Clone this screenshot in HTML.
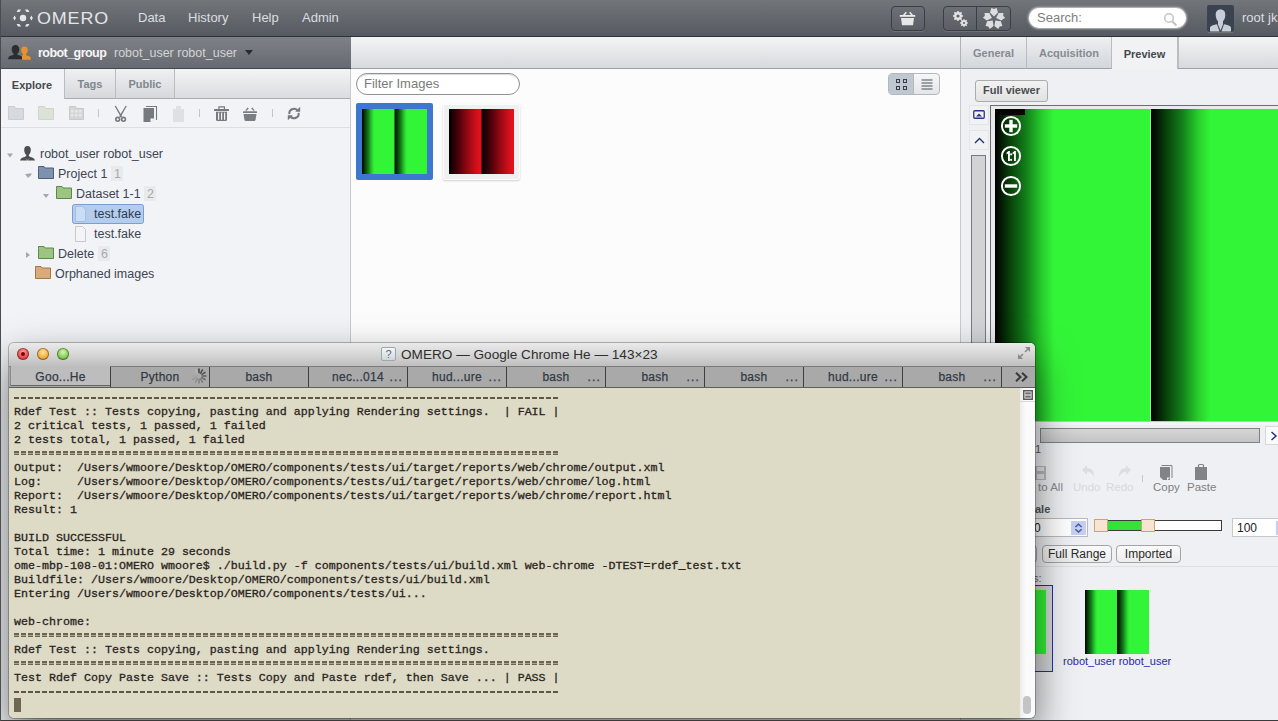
<!DOCTYPE html>
<html><head><meta charset="utf-8">
<style>
*{margin:0;padding:0;box-sizing:border-box}
html,body{width:1278px;height:721px;overflow:hidden;background:#f3f4f6;font-family:"Liberation Sans",sans-serif;position:relative}
.a{position:absolute}
#top{left:0;top:0;width:1278px;height:37px;background:linear-gradient(#72767b,#555a60);border-bottom:1px solid #2f3236}
#logo{left:37px;top:9px;color:#e4e5e7;font-size:16.6px;letter-spacing:0.8px;transform:scaleX(1.08);transform-origin:0 0}
.tbtn{top:6px;height:25px;border:1px solid #3b3e43;border-radius:4px;background:linear-gradient(#6c7076,#5a5f65);box-shadow:0 1px 0 rgba(255,255,255,.12)}
.rt{top:0;height:32px;border-right:1px solid #b9bdc2;border-bottom:1px solid #9ea2a7;font-size:11px;font-weight:bold;color:#858b93;text-align:center;line-height:33px;background:linear-gradient(#eef0f2,#d3d6da)}
.rt.act{background:#f1f2f4;border-bottom:none;color:#45484c;line-height:35px}
.ltab{top:0;height:30px;border-right:1px solid #b9bdc2;border-bottom:1px solid #a9adb2;font-size:11px;font-weight:bold;color:#7f868e;text-align:center;line-height:30px;background:linear-gradient(#eef0f2,#d6d8dc)}
.ltab.act{background:#f1f3f6;border-bottom:none;color:#46494d;line-height:32px}
.g{background:linear-gradient(90deg,#000 0%,#073d09 9%,#13801a 20%,#27cc2c 30%,#33f538 38%,#33f538 100%) 0 0/50% 100% repeat-x}
.r{background:linear-gradient(90deg,#000 0%,#50000a 30%,#a00a14 62%,#d5101c 86%,#ea1020 100%) 0 0/50% 100% repeat-x}
.menu{top:10px;color:#dcdee0;font-size:13px}
#grp{left:0;top:37px;width:351px;height:32px;background:linear-gradient(#7e8288,#676b71);border-bottom:1px solid #44474c}
#rhdr{left:351px;top:37px;width:927px;height:32px;background:linear-gradient(#f3f4f6,#d7d9dc);border-bottom:1px solid #9ea2a7}
#left{left:0;top:69px;width:351px;height:652px;background:#f1f3f6;border-right:1px solid #c8cbce}
#mid{left:351px;top:69px;width:609px;height:652px;background:#fcfcfc}
#right{left:960px;top:69px;width:318px;height:652px;background:#eff0f3;border-left:1px solid #c8cbce}
/* terminal */
#term{left:9px;top:343px;width:1026px;height:375px;border-radius:5px 5px 5px 5px;overflow:hidden;background:#dddac6;box-shadow:0 18px 40px rgba(0,0,0,.55),0 0 0 1px rgba(0,0,0,.25)}
#ttl{left:0;top:0;width:1026px;height:23px;background:linear-gradient(#eaeaea,#d6d6d6 50%,#bfbfbf);}
#tabs{left:0;top:23px;width:1026px;height:22px;background:#a9a9a9;border-top:1px solid #7b7b7b;border-bottom:1px solid #5d5d5d}
.tab{top:0;height:20px;border-left:1px solid #3e3e3e;font-size:12px;color:#333a46;text-align:center;line-height:21px;-webkit-text-stroke:0.25px #333a46;letter-spacing:0.3px}
#tbody{left:0;top:45px;width:1011px;height:330px;background:#dddac6}
#tscroll{left:1011px;top:45px;width:15px;height:330px;background:linear-gradient(90deg,#ececec,#fbfbfb 40%,#fafafa)}
pre{position:absolute;left:5px;top:3px;font-family:"Liberation Mono",monospace;font-size:11.67px;line-height:14px;color:#2a241d;-webkit-text-stroke:0.3px #2a241d}
.dm{color:#6e6453}
.tr{font-size:12.5px;color:#3d4452;white-space:nowrap;margin-top:1px}
.cnt{color:#a7a9ad}
.btn{border:1px solid #a9abae;border-radius:3px;background:linear-gradient(#f2f2f2,#e2e2e2);text-align:center;line-height:18px}
.btn2{top:545px;height:18px;border:1px solid #a2a4a7;border-radius:4px;background:linear-gradient(#fafafa,#ececec);font-size:12px;color:#2a2a2a;text-align:center;line-height:17px}
.rtx{font-size:11.5px}
.knob{top:519px;width:14px;height:13px;background:#f9e3d3;border:1px solid #c2ab68}
.el{position:absolute;right:4px;top:0;letter-spacing:1.2px}
.tl{top:5px;width:12px;height:12px;border-radius:6px;box-shadow:inset 0 0 0 1px rgba(60,30,10,.45)}
.dash{position:absolute;left:6px;width:546px;height:2px;background:repeating-linear-gradient(90deg,#5e5545 0 5px,transparent 5px 7px)}
.eq{position:absolute;left:6px;width:546px;height:4px;background:repeating-linear-gradient(90deg,#6c6454 0 5px,transparent 5px 7px)}
.eq i{position:absolute;left:0;top:2px;width:546px;height:1px;background:repeating-linear-gradient(90deg,#aaa390 0 5px,transparent 5px 7px)}
</style></head><body>
<div id="top" class="a">
  <svg class="a" style="left:11px;top:6px" width="24" height="24" viewBox="0 0 24 24"><circle cx="12" cy="12" r="3.2" fill="#e6e7e9"/><g fill="#e6e7e9"><path d="M20.40 14.60 L21.85 12.00 L20.40 9.40 L18.95 12.00 Z"/><path d="M18.45 6.03 L16.93 3.47 L13.95 3.43 L15.48 5.98 Z"/><path d="M10.05 3.43 L7.08 3.47 L5.55 6.03 L8.53 5.98 Z"/><path d="M3.60 9.40 L2.15 12.00 L3.60 14.60 L5.05 12.00 Z"/><path d="M5.55 17.97 L7.07 20.53 L10.05 20.57 L8.52 18.02 Z"/><path d="M13.95 20.57 L16.93 20.53 L18.45 17.97 L15.48 18.02 Z"/></g></svg>
  <div id="logo" class="a">OMERO</div>
  <div class="a menu" style="left:138px">Data</div>
  <div class="a menu" style="left:188px">History</div>
  <div class="a menu" style="left:252px">Help</div>
  <div class="a menu" style="left:302px">Admin</div>
  <div class="a tbtn" style="left:891px;width:34px"><svg class="a" style="left:0;top:0" width="32" height="23" viewBox="0 0 32 23"><g stroke="#ececec" stroke-width="1.5" fill="none"><path d="M11.5 8.5 L14.3 5.2"/><path d="M17.7 5.2 L20.5 8.5"/></g><path d="M7.8 8 L23.2 8 L23.2 9.8 L7.8 9.8 Z" fill="#ececec"/><path d="M9 11 L22 11 L21 18.2 L10 18.2 Z" fill="#e6e6e6"/></svg></div>
  <div class="a tbtn" style="left:943px;width:68px"><i class="a" style="left:32px;top:0;width:1px;height:24px;background:#3a3d42"></i>
    <svg class="a" style="left:7.5px;top:2.5px" width="18" height="18" viewBox="0 0 18 18"><g fill="#e4e4e4"><circle cx="6" cy="6" r="3.9"/><circle cx="12" cy="13" r="2.8"/></g><g stroke="#e4e4e4" stroke-width="1.5"><path d="M6 0.9V11.1M0.9 6H11.1M2.4 2.4L9.6 9.6M9.6 2.4L2.4 9.6"/><path d="M12 9.2V16.8M8.2 13H15.8M9.3 10.3L14.7 15.7M14.7 10.3L9.3 15.7"/></g><g fill="#5f6369"><circle cx="6" cy="6" r="1.6"/><circle cx="12" cy="13" r="1.1"/></g></svg>
    <svg class="a" style="left:37px;top:1px" width="28" height="24" viewBox="0 0 28 24"><path fill="#dcdddf" d="M13.00 8.50 L9.00 4.50 L10.40 -0.10 L13.00 1.10 L15.60 -0.10 L17.00 4.50 Z M15.09 10.02 L17.66 4.98 L22.47 4.89 L22.13 7.73 L24.07 9.84 L20.13 12.59 Z M14.29 12.48 L19.88 13.36 L21.45 17.91 L18.64 18.47 L17.24 20.97 L13.41 18.07 Z M11.71 12.48 L12.59 18.07 L8.76 20.97 L7.36 18.47 L4.55 17.91 L6.12 13.36 Z M10.91 10.02 L5.87 12.59 L1.93 9.84 L3.87 7.73 L3.53 4.89 L8.34 4.98 Z"/></svg>
  </div>
  <div class="a" style="left:1029px;top:8px;width:157px;height:20px;border-radius:10px;background:#fff;box-shadow:0 0 2px 1px rgba(255,255,255,.6)"><span class="a" style="left:8px;top:2px;font-size:13px;color:#7e7e7e">Search:</span>
    <svg class="a" style="left:134px;top:4px" width="15" height="15" viewBox="0 0 15 15"><circle cx="6" cy="6" r="4.3" stroke="#c4c4c4" stroke-width="1.5" fill="none"/><path d="M9.2 9.2 L13.5 13.5" stroke="#c4c4c4" stroke-width="2.2"/></svg></div>
  <div class="a" style="left:1207px;top:5px;width:27px;height:27px;background:#3b4351;border-radius:2px;box-shadow:0 1px 0 rgba(255,255,255,.15)">
    <svg class="a" style="left:0;top:0" width="27" height="27" viewBox="0 0 27 27"><g fill="#c9ced6"><path d="M13.5 4.6 C17 4.6 18.3 7 18.3 10 C18.3 13 17 15.3 16 16.3 L16 19.5 L13.5 25.5 L11 19.5 L11 16.3 C10 15.3 8.7 13 8.7 10 C8.7 7 10 4.6 13.5 4.6 Z"/><path d="M3 26.5 L3 23 C3 21 5.5 20 10 19.2 L12.6 26.5 Z"/><path d="M24 26.5 L24 23 C24 21 21.5 20 17 19.2 L14.4 26.5 Z"/></g></svg></div>
  <div class="a menu" style="left:1242px;top:10px;color:#dcdee0">root jk</div>
</div>
<div id="grp" class="a">
  <svg class="a" style="left:7px;top:6px" width="26" height="18" viewBox="0 0 26 18"><path d="M8.5 2 C11 2 12.3 3.8 12.3 6.2 C12.3 8.6 11.2 10.2 10.3 10.8 L10.3 11.8 C13 12.5 15.5 13.2 15.8 15 L15.8 16.3 L1.2 16.3 L1.2 15 C1.5 13.2 4 12.5 6.7 11.8 L6.7 10.8 C5.8 10.2 4.7 8.6 4.7 6.2 C4.7 3.8 6 2 8.5 2 Z" fill="#2c2d30"/><path d="M17.5 3.5 C19.7 3.5 20.8 5 20.8 7 C20.8 9.2 19.8 10.6 19 11.1 L19 12.3 C21.5 12.9 23.5 13.6 23.8 15.2 L23.8 16.8 L15 16.8 L15 12.3 L16 12.3 L16 11.1 C15.2 10.6 14.2 9.2 14.2 7 C14.2 5 15.3 3.5 17.5 3.5 Z" fill="#e8922e"/></svg>
  <div class="a" style="left:38px;top:9px;font-size:12.5px;font-weight:bold;color:#f6f6f6;letter-spacing:-0.55px">robot_group</div>
  <div class="a" style="left:114px;top:9px;font-size:12.5px;color:#d2d3d5">robot_user robot_user</div>
  <svg class="a" style="left:245px;top:13px" width="8" height="5"><path d="M0 0 H8 L4 5 Z" fill="#2a2b2d"/></svg>
</div>
<div id="rhdr" class="a">
  <div class="a" style="left:609px;top:0;width:1px;height:32px;background:#b0b4b9"></div>
  <div class="a rt" style="left:610px;width:66px">General</div>
  <div class="a rt" style="left:676px;width:85px">Acquisition</div>
  <div class="a rt act" style="left:761px;width:66px">Preview</div>
  <div class="a" style="left:827px;top:0;width:1px;height:31px;background:#b9bdc2"></div>
</div>
<div id="left" class="a">
  <div class="a ltab act" style="left:0;width:65px">Explore</div>
  <div class="a ltab" style="left:65px;width:51px">Tags</div>
  <div class="a ltab" style="left:116px;width:59px">Public</div>
  <div class="a" style="left:175px;top:0;width:175px;height:30px;border-bottom:1px solid #a9adb2;background:linear-gradient(#f3f4f6,#dadcdf)"></div>
  <div class="a" style="left:0;top:58px;width:350px;height:1px;background:#dfe1e4"></div>
</div>
<div id="mid" class="a">
  <div class="a" style="left:5px;top:4px;width:164px;height:22px;border:1px solid #8f9396;border-radius:11px;background:#fff;box-shadow:inset 0 1px 1px rgba(0,0,0,.15)"><span class="a" style="left:7px;top:2px;font-size:13px;color:#7a7a7a">Filter Images</span></div>
  <div class="a" style="left:537px;top:4px;width:52px;height:22px;border:1px solid #b4b8bd;border-radius:4px;background:linear-gradient(#f6f7f8,#e3e5e8);overflow:hidden">
    <div class="a" style="left:0;top:0;width:25px;height:20px;background:#bfc7d0;border-right:1px solid #b4b8bd"></div>
    <svg class="a" style="left:7px;top:5px" width="11" height="11"><g fill="#3a3e44"><rect x="0" y="0" width="4" height="4"/><rect x="7" y="0" width="4" height="4"/><rect x="0" y="7" width="4" height="4"/><rect x="7" y="7" width="4" height="4"/></g><g fill="#bfc7d0"><rect x="1" y="1" width="2" height="2"/><rect x="8" y="1" width="2" height="2"/><rect x="1" y="8" width="2" height="2"/><rect x="8" y="8" width="2" height="2"/></g></svg>
    <svg class="a" style="left:32px;top:5px" width="12" height="11"><g fill="#4a4e54"><rect x="0.5" y="0.5" width="11" height="1"/><rect x="0.5" y="3.5" width="11" height="1"/><rect x="0.5" y="6.5" width="11" height="1"/><rect x="0.5" y="9.5" width="11" height="1"/></g></svg>
  </div>
  <div class="a" style="left:5px;top:34px;width:77px;height:77px;background:#3d78cf;border-radius:2px"></div>
  <div class="a img g" style="left:11px;top:40px;width:65px;height:65px"></div>
  <div class="a" style="left:92px;top:35px;width:77px;height:76px;background:#f0f0f0;border:1px solid #fbfbfb;border-radius:2px;box-shadow:0 1px 2px rgba(0,0,0,.18)"></div>
  <div class="a img r" style="left:98px;top:40px;width:65px;height:65px"></div>
</div>
<div id="right" class="a"></div>
<div class="a btn" style="left:975px;top:80px;width:73px;height:22px;font-weight:bold;font-size:11px;color:#4a4d52">Full viewer</div>
<div class="a" style="left:969px;top:105px;width:20px;height:20px;background:#f1f2f4;border:1px solid #e3e4e6"><svg class="a" style="left:3px;top:4px" width="12" height="10"><rect x="0.75" y="0.75" width="10.5" height="7.5" rx="1" fill="none" stroke="#2a3585" stroke-width="1.3"/><path d="M3 6.5 L6 3.5 L9 6.5 Z" fill="#2a3585"/></svg></div>
<div class="a" style="left:969px;top:130px;width:20px;height:20px;background:#f1f2f4;border:1px solid #e3e4e6"><svg class="a" style="left:4px;top:6px" width="12" height="8"><path d="M1 6 L5.5 1.5 L10 6" fill="none" stroke="#23306e" stroke-width="1.4"/></svg></div>
<div class="a" style="left:971px;top:155px;width:15px;height:190px;background:#d2d3d5;border:1px solid #77797c"></div>
<div class="a" style="left:990px;top:105px;width:288px;height:320px;background:#e9eaec;border:1px solid #6b6d70;border-right:none"></div>
<div class="a img g" style="left:995px;top:109px;width:312px;height:312px;background-size:156px 100%"></div>
<div class="a" style="left:1150px;top:109px;width:1px;height:312px;background:rgba(200,230,200,.6)"></div>
<div class="a" style="left:995px;top:109px;width:30px;height:6px;background:#050505"></div>
<svg class="a" style="left:999px;top:114px" width="24" height="84" viewBox="0 0 24 84">
 <g fill="none" stroke="#fff" stroke-width="2"><circle cx="12" cy="12" r="9.1"/><circle cx="12" cy="42" r="9.1"/><circle cx="12" cy="72" r="9.1"/></g>
 <g fill="#fff"><rect x="10.3" y="5.8" width="3.4" height="12.4"/><rect x="5.8" y="10.3" width="12.4" height="3.4"/><rect x="5.8" y="70.3" width="12.4" height="3.4"/></g>
 <g fill="#fff"><path d="M7.6 38.6 L9.6 37 L10.9 37 L10.9 47 L9 47 L9 39.6 L7.6 40.6 Z"/><rect x="11.2" y="39.4" width="1.8" height="1.9"/><rect x="11.2" y="44.9" width="1.8" height="1.9"/><path d="M13.6 38.6 L15.6 37 L16.9 37 L16.9 47 L15 47 L15 39.6 L13.6 40.6 Z"/></g>
</svg>
<div class="a" style="left:990px;top:421px;width:288px;height:4px;background:#f4f5f7;border-top:1px solid #c0c2c5"></div>
<div class="a" style="left:1040px;top:428px;width:220px;height:15px;background:linear-gradient(#d6d6d6,#c4c4c4);border:1px solid #7f8184"></div>
<div class="a" style="left:1265px;top:426px;width:16px;height:19px;background:#fafafa;border:1px solid #d8d8d8"><svg class="a" style="left:4px;top:4px" width="8" height="10"><path d="M1.5 1 L6 5 L1.5 9" fill="none" stroke="#23306e" stroke-width="1.5"/></svg></div>
<div class="a" style="left:1035px;top:443px;font-size:11px;color:#555">1</div>
<svg class="a" style="left:1034px;top:462px" width="190" height="22" viewBox="1034 462 190 22">
 <path d="M1035 466 L1046 466 L1046 480 L1035 480 Z" fill="#b9bbbe"/><rect x="1037" y="474" width="7" height="5" fill="#e8e9eb"/><rect x="1037" y="467" width="7" height="4" fill="#e8e9eb"/>
 <path d="M1082 470 L1087 465 L1087 468 C1092 468 1094 471 1094 477 C1092 473 1090 472 1087 472 L1087 475 Z" fill="#dcdde0"/>
 <path d="M1131 470 L1126 465 L1126 468 C1121 468 1119 471 1119 477 C1121 473 1123 472 1126 472 L1126 475 Z" fill="#dcdde0"/>
 <rect x="1142" y="475" width="1" height="7" fill="#c8c9cb"/>
 <path d="M1160 467 L1170 467 L1170 480 L1163 480 L1160 477 Z" fill="#818387"/><path d="M1161.5 465.5 L1172 465.5 L1172 478" stroke="#818387" fill="none"/><path d="M1170 477.5 L1167 480.5 L1167 477.5 Z" fill="#eef0f2"/>
 <path d="M1195 467 L1207 467 L1207 480 L1195 480 Z" fill="#818387"/><rect x="1198.5" y="464.5" width="5" height="3.5" rx="1" fill="none" stroke="#818387" stroke-width="1.2"/>
</svg>
<div class="a rtx" style="left:1038px;top:481px;color:#8a8c90">to All</div>
<div class="a rtx" style="left:1073px;top:481px;color:#d7d8db">Undo</div>
<div class="a rtx" style="left:1106px;top:481px;color:#d7d8db">Redo</div>
<div class="a rtx" style="left:1153px;top:481px;color:#7d8084">Copy</div>
<div class="a rtx" style="left:1187px;top:481px;color:#7d8084">Paste</div>
<div class="a" style="left:1035px;top:503px;font-size:11px;font-weight:bold;color:#505357">ale</div>
<div class="a" style="left:1020px;top:518px;width:68px;height:19px;background:#fff;border:1px solid #b7b9bc"><span class="a" style="left:13px;top:2px;font-size:12px;color:#222">0</span><div class="a" style="left:50px;top:2px;width:15px;height:14px;background:#c8cef1"><svg class="a" style="left:3px;top:1px" width="9" height="12"><path d="M1 4.8 L4.5 1.5 L8 4.8 L6.6 4.8 L4.5 2.9 L2.4 4.8 Z M1 7.4 L4.5 10.7 L8 7.4 L6.6 7.4 L4.5 9.3 L2.4 7.4 Z" fill="#3a5a9a" stroke="#3a5a9a" stroke-width="0.6"/></svg></div></div>
<div class="a" style="left:1094px;top:520px;width:128px;height:11px;background:#fff;border:1px solid #3a3a3a"></div>
<div class="a" style="left:1108px;top:521px;width:33px;height:9px;background:#33e23a"></div>
<div class="a knob" style="left:1094px"></div><div class="a knob" style="left:1141px"></div>
<div class="a" style="left:1232px;top:518px;width:60px;height:19px;background:#fff;border:1px solid #c7c9cc"><span class="a" style="left:4px;top:2px;font-size:12px;color:#222">100</span><div class="a" style="left:43px;top:2px;width:15px;height:14px;background:#c8cef1"></div></div>
<div class="a btn2" style="left:1010px;width:27px"></div>
<div class="a btn2" style="left:1042px;width:70px">Full Range</div>
<div class="a btn2" style="left:1116px;width:65px">Imported</div>
<div class="a" style="left:1020px;top:566px;width:258px;height:1px;background:#dddfe2"></div>
<div class="a" style="left:1033px;top:572px;font-size:11px;color:#666">s:</div>
<div class="a" style="left:1010px;top:585px;width:43px;height:87px;border:1px solid #2432a6;background:#d7d8da"></div>
<div class="a img g" style="left:1014px;top:590px;width:32px;height:64px;background-size:64px 100%;background-position:-32px 0"></div>
<div class="a img g" style="left:1085px;top:590px;width:64px;height:64px;background-size:32px 100%"></div>
<div class="a" style="left:1063px;top:655px;font-size:11px;color:#2626b0">robot_user robot_user</div>
<!-- toolbar -->
<svg class="a" style="left:0;top:98px" width="350" height="30" viewBox="0 98 350 30">
 <g fill="#d6d9dd" stroke="#c9ccd1" stroke-width="1"><path d="M8.5 108.5 L8.5 106.5 L14.5 106.5 L15.5 108.5 L23.5 108.5 L23.5 119.5 L8.5 119.5 Z"/></g>
 <g fill="#dce3d6" stroke="#cfd6c8" stroke-width="1"><path d="M38.5 108.5 L38.5 106.5 L44.5 106.5 L45.5 108.5 L53.5 108.5 L53.5 119.5 L38.5 119.5 Z"/></g>
 <g fill="#d4d5d7" stroke="#c8c9cb"><path d="M69.5 108.5 L69.5 106.5 L75.5 106.5 L76.5 108.5 L83.5 108.5 L83.5 119.5 L69.5 119.5 Z"/></g>
 <g fill="#e6e7e9"><rect x="71" y="110" width="2.5" height="2.5"/><rect x="75" y="110" width="2.5" height="2.5"/><rect x="79" y="110" width="2.5" height="2.5"/><rect x="71" y="114" width="2.5" height="2.5"/><rect x="75" y="114" width="2.5" height="2.5"/><rect x="79" y="114" width="2.5" height="2.5"/></g>
 <rect x="98" y="109" width="1" height="8" fill="#c4c6c9"/>
 <rect x="199" y="109" width="1" height="8" fill="#c4c6c9"/>
 <rect x="272" y="109" width="1" height="8" fill="#c4c6c9"/>
 <g fill="#76797d"><path d="M114.6 106 L115.8 105.8 L122.2 116.5 L121 117.5 Z"/><path d="M126.8 106 L125.6 105.8 L119.2 116.5 L120.4 117.5 Z"/></g><g stroke="#76797d" stroke-width="1.6" fill="none"><circle cx="117.7" cy="119.3" r="1.9"/><circle cx="123.5" cy="119.3" r="1.9"/></g>
 <path d="M143.5 108 L154 108 L154 122 L143.5 122 Z" fill="#76797d"/><path d="M146 106.5 L156.5 106.5 L156.5 120" stroke="#76797d" stroke-width="1.1" fill="none"/><path d="M154 118.5 L150.5 122 L154 122 Z" fill="#f2f3f5"/><path d="M154 118.5 L150.5 118.5 L150.5 122 Z" fill="#fff"/>
 <path d="M173 109 L184 109 L184 122 L173 122 Z" fill="#dfe0e2"/><rect x="176" y="106" width="5" height="4" fill="#dfe0e2"/>
 <g fill="#76797d"><rect x="214" y="109" width="15" height="2" rx="0.5"/><path d="M218.3 109 L218.3 106.2 L225 106.2 L225 109 L223.8 109 L223.8 107.4 L219.5 107.4 L219.5 109 Z"/><path d="M216 111.8 L227 111.8 L227 119.5 Q227 121 225.5 121 L217.5 121 Q216 121 216 119.5 Z"/></g><g fill="#f2f3f5"><rect x="218" y="112.6" width="1.2" height="7.2"/><rect x="221" y="112.6" width="1.2" height="7.2"/><rect x="224" y="112.6" width="1.2" height="7.2"/></g>
 <g fill="#7a7d81"><path d="M245.2 110.4 L247.6 107.6 L248.8 108.4 L246.6 110.8 Z"/><path d="M254.8 110.4 L252.4 107.6 L251.2 108.4 L253.4 110.8 Z"/><rect x="243" y="111.2" width="14" height="1.8" rx="0.6"/><path d="M243.5 114 L256.5 114 L255.5 120 Q255.3 121 254.3 121 L245.7 121 Q244.7 121 244.5 120 Z"/></g>
 <g stroke="#76797d" stroke-width="2" fill="none"><path d="M289.4 114.2 A4.6 4.6 0 0 1 297.5 110.5"/><path d="M298.6 112.8 A4.6 4.6 0 0 1 290.5 116.5"/></g><path d="M300.2 106.8 L300.2 111.8 L295.2 111.8 Z" fill="#76797d"/><path d="M287.8 120.2 L287.8 115.2 L292.8 115.2 Z" fill="#76797d"/>
 <rect x="0" y="127" width="350" height="1" fill="#dcdee1"/>
</svg>
<!-- tree -->
<svg class="a" style="left:0;top:140px" width="160" height="145" viewBox="0 140 160 145">
 <path d="M7 153.5 L13 153.5 L10 157.5 Z" fill="#a3a8ae"/>
 <path d="M27.5 173.5 L32 173.5 L29.75 177 Z" fill="#a3a8ae"/><path d="M25 174 L31 174 L28 178 Z" fill="#a3a8ae"/>
 <path d="M43 194 L49 194 L46 198 Z" fill="#a3a8ae"/>
 <path d="M26 252 L30 255 L26 258 Z" fill="#a3a8ae"/>
 <g fill="#4c4d50"><path d="M27.5 146 C30 146 30.8 148 30.8 150 C30.8 152.5 29.5 154.5 28.8 155 L28.8 156 L31 157.3 L27.5 160 L24 157.3 L26.2 156 L26.2 155 C25.5 154.5 24.2 152.5 24.2 150 C24.2 148 25 146 27.5 146 Z"/><path d="M20 160.5 C20.5 158.5 22 157.5 24.5 157 L27.5 160.5 Z"/><path d="M35 160.5 C34.5 158.5 33 157.5 30.5 157 L27.5 160.5 Z"/></g>
 <path d="M38.5 168.5 L38.5 166.5 L44 166.5 L45 168 L53.5 168 L53.5 178.5 L38.5 178.5 Z" fill="#7d92ad" stroke="#4d5e75"/>
 <path d="M56.5 188.5 L56.5 186.5 L62 186.5 L63 188 L71.5 188 L71.5 198.5 L56.5 198.5 Z" fill="#9dc483" stroke="#5b8848"/>
 <path d="M38.5 248.5 L38.5 246.5 L44 246.5 L45 248 L53.5 248 L53.5 258.5 L38.5 258.5 Z" fill="#9dc483" stroke="#5b8848"/>
 <path d="M35.5 268.5 L35.5 266.5 L41 266.5 L42 268 L50.5 268 L50.5 278.5 L35.5 278.5 Z" fill="#d9aa7a" stroke="#a0774c"/>
 <rect x="72.5" y="204.5" width="71" height="19" rx="2" fill="#b4cdee" stroke="#7d9dcb"/>
 <path d="M75.5 206.5 L82.5 206.5 L85.5 209.5 L85.5 221.5 L75.5 221.5 Z" fill="#c9ddf5" stroke="#a6c0e4"/>
 <path d="M75.5 226.5 L82.5 226.5 L85.5 229.5 L85.5 241.5 L75.5 241.5 Z" fill="#f4f4f4" stroke="#c9c9c9"/>
 <rect x="111" y="166" width="12" height="15" fill="#e9eaec"/>
 <rect x="144" y="186" width="12" height="15" fill="#e9eaec"/>
 <rect x="98" y="246" width="12" height="15" fill="#e9eaec"/>
</svg>
<div class="a tr" style="left:40px;top:146px">robot_user robot_user</div>
<div class="a tr" style="left:58px;top:166px">Project 1</div><div class="a tr cnt" style="left:114px;top:166px">1</div>
<div class="a tr" style="left:76px;top:186px">Dataset 1-1</div><div class="a tr cnt" style="left:147px;top:186px">2</div>
<div class="a tr" style="left:94px;top:206px;color:#2d3a4f">test.fake</div>
<div class="a tr" style="left:94px;top:226px">test.fake</div>
<div class="a tr" style="left:58px;top:246px">Delete</div><div class="a tr cnt" style="left:101px;top:246px">6</div>
<div class="a tr" style="left:55px;top:266px">Orphaned images</div>
<div id="term" class="a">
  <div id="ttl" class="a">
    <div class="a tl" style="left:8px;background:radial-gradient(circle at 50% 35%,#f7a8a8 0,#e9494c 55%,#b3262a 100%)"><i class="a" style="left:4px;top:4px;width:4px;height:4px;border-radius:2px;background:#7a0008"></i></div>
    <div class="a tl" style="left:28px;background:radial-gradient(circle at 50% 35%,#ffe0a0 0,#f0b040 55%,#b07a18 100%)"></div>
    <div class="a tl" style="left:48px;background:radial-gradient(circle at 50% 35%,#d6f5b8 0,#7fd055 55%,#3f8a22 100%)"></div>
    <div class="a" style="left:372px;top:4px;width:15px;height:14px;border:1px solid #9aa;background:linear-gradient(#f4f6f8,#cfd6dc);border-radius:2px;font-size:11px;line-height:12px;text-align:center;color:#667">?</div>
    <div class="a" style="left:392px;top:4px;font-size:13.6px;color:#2e2e2e;white-space:nowrap">OMERO — Google Chrome He — 143×23</div>
    <svg class="a" style="left:1008px;top:3px" width="14" height="14" viewBox="0 0 14 14"><g stroke="#8a8a8a" stroke-width="1.6" fill="none"><path d="M2 12 L6 8"/><path d="M8 6 L12 2"/></g><g fill="#8a8a8a"><path d="M1 8 L1 13 L6 13 Z"/><path d="M8 1 L13 1 L13 6 Z"/></g></svg>
  </div>
  <div id="tabs" class="a">
    <div class="a tab" style="left:1px;top:-1px;width:100px;background:#bdbdbd;border-left:1px solid #8a8a8a;border-bottom:1px solid #666;height:20px;line-height:22px">Goo...He</div>
    <div class="a tab" style="left:101px;width:99px">Python<svg class="a" style="left:80px;top:0.5px" width="16" height="16" viewBox="0 0 16 16"><g stroke-width="1.5" stroke-linecap="round"><path d="M8.00 4.70L8.00 1.00" stroke="#404040"/><path d="M9.65 5.14L11.50 1.94" stroke="#4a4a4a"/><path d="M10.86 6.35L14.06 4.50" stroke="#555555"/><path d="M11.30 8.00L15.00 8.00" stroke="#606060"/><path d="M10.86 9.65L14.06 11.50" stroke="#6b6b6b"/><path d="M9.65 10.86L11.50 14.06" stroke="#767676"/><path d="M8.00 11.30L8.00 15.00" stroke="#818181"/><path d="M6.35 10.86L4.50 14.06" stroke="#8c8c8c"/><path d="M5.14 9.65L1.94 11.50" stroke="#979797"/><path d="M4.70 8.00L1.00 8.00" stroke="#a2a2a2"/><path d="M5.14 6.35L1.94 4.50" stroke="#adadad"/><path d="M6.35 5.14L4.50 1.94" stroke="#b8b8b8"/></g></svg></div>
    <div class="a tab" style="left:200px;width:99px">bash</div>
    <div class="a tab" style="left:299px;width:99px">nec...014<span class="el">...</span></div>
    <div class="a tab" style="left:398px;width:99px">hud...ure<span class="el">...</span></div>
    <div class="a tab" style="left:497px;width:99px">bash<span class="el">...</span></div>
    <div class="a tab" style="left:596px;width:99px">bash<span class="el">...</span></div>
    <div class="a tab" style="left:695px;width:99px">bash<span class="el">...</span></div>
    <div class="a tab" style="left:794px;width:99px">hud...ure<span class="el">...</span></div>
    <div class="a tab" style="left:893px;width:99px">bash<span class="el">...</span></div>
    <div class="a tab" style="left:992px;width:34px"><svg class="a" style="left:13px;top:5px" width="14" height="10" viewBox="0 0 14 10"><path d="M1 0.8 L5.5 5 L1 9.2 M7 0.8 L11.5 5 L7 9.2" fill="none" stroke="#3a3a3a" stroke-width="2"/></svg></div>
  </div>
  <div id="tbody" class="a">
<pre>

Rdef Test :: Tests copying, pasting and applying Rendering settings.  | FAIL |
2 critical tests, 1 passed, 1 failed
2 tests total, 1 passed, 1 failed

Output:  /Users/wmoore/Desktop/OMERO/components/tests/ui/target/reports/web/chrome/output.xml
Log:     /Users/wmoore/Desktop/OMERO/components/tests/ui/target/reports/web/chrome/log.html
Report:  /Users/wmoore/Desktop/OMERO/components/tests/ui/target/reports/web/chrome/report.html
Result: 1

BUILD SUCCESSFUL
Total time: 1 minute 29 seconds
ome-mbp-108-01:OMERO wmoore$ ./build.py -f components/tests/ui/build.xml web-chrome -DTEST=rdef_test.txt
Buildfile: /Users/wmoore/Desktop/OMERO/components/tests/ui/build.xml
Entering /Users/wmoore/Desktop/OMERO/components/tests/ui...

web-chrome:

Rdef Test :: Tests copying, pasting and applying Rendering settings.

Test Rdef Copy Paste Save :: Tests Copy and Paste rdef, then Save ... | PASS |

</pre>
<div class="dash" style="left:5px;top:9px"></div><div class="eq" style="left:5px;top:63px"><i></i></div><div class="eq" style="left:5px;top:245px"><i></i></div><div class="eq" style="left:5px;top:273px"><i></i></div><div class="dash" style="left:5px;top:303px"></div>
<div class="a" style="left:5px;top:310px;width:7px;height:14px;background:#6e6555"></div>
  </div>
  <div id="tscroll" class="a"><div class="a" style="left:0;top:13px;width:15px;height:1px;background:#d9d9d9"></div><svg class="a" style="left:3px;top:2px" width="10" height="10" viewBox="0 0 10 10"><rect x="0.75" y="0.75" width="8.5" height="8.5" fill="#fafafa" stroke="#5a5a5a" stroke-width="1.5"/><rect x="2.2" y="2.3" width="5.6" height="2.2" fill="#707070"/><rect x="2.2" y="5.5" width="5.6" height="2.2" fill="#707070"/></svg><div class="a" style="left:3px;top:308px;width:8px;height:18px;border-radius:4px;background:#c4c4c4"></div></div>
</div>
<div class="a" style="left:0;top:720px;width:1278px;height:1px;background:#3a3a3a"></div>
<div class="a" style="left:0;top:0;width:1px;height:721px;background:#4a4c50"></div>
</body></html>
